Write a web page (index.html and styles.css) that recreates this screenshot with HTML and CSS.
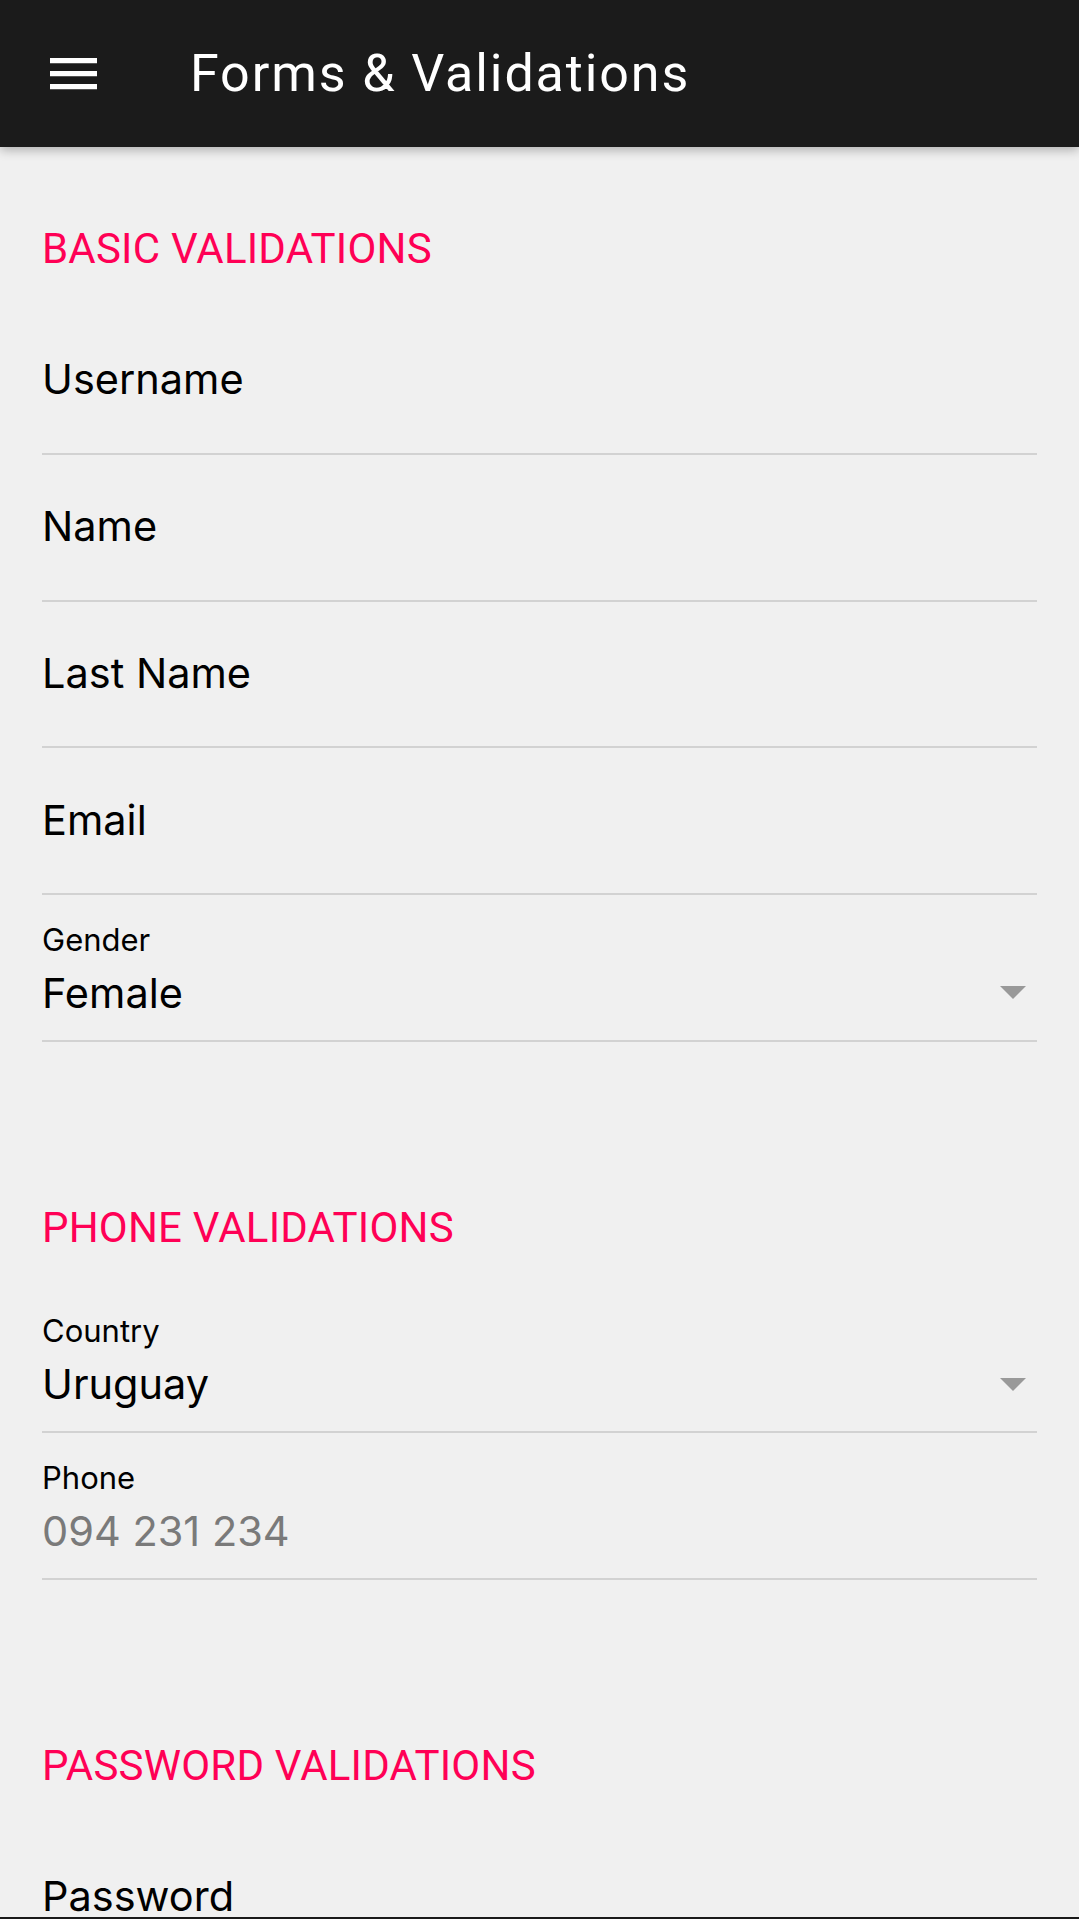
FILE: index.html
```html
<!DOCTYPE html>
<html lang="en">
<head>
<meta charset="utf-8">
<title>Forms &amp; Validations</title>
<link rel="stylesheet" href="styles.css">
</head>
<body>
<header class="appbar">
  <svg class="menu-icon" width="47" height="32" viewBox="0 0 47 32" aria-hidden="true">
    <rect x="0" y="0" width="47" height="5.25" fill="#ffffff"/>
    <rect x="0" y="13" width="47" height="5.25" fill="#ffffff"/>
    <rect x="0" y="26" width="47" height="5.25" fill="#ffffff"/>
  </svg>
  <h1 class="title">Forms &amp; Validations</h1>
</header>

<main class="form">
  <section class="section">
    <h2 class="section-title">BASIC VALIDATIONS</h2>
    <div class="field"><span class="hint">Username</span></div>
    <div class="field"><span class="hint">Name</span></div>
    <div class="field"><span class="hint">Last Name</span></div>
    <div class="field"><span class="hint">Email</span></div>
    <div class="field labeled">
      <span class="label">Gender</span>
      <div class="select-row">
        <span class="value">Female</span>
        <span class="arrow"></span>
      </div>
    </div>
  </section>

  <section class="section">
    <h2 class="section-title">PHONE VALIDATIONS</h2>
    <div class="field labeled">
      <span class="label">Country</span>
      <div class="select-row">
        <span class="value">Uruguay</span>
        <span class="arrow"></span>
      </div>
    </div>
    <div class="field labeled">
      <span class="label">Phone</span>
      <div class="select-row">
        <span class="value placeholder">094 231 234</span>
      </div>
    </div>
  </section>

  <section class="section">
    <h2 class="section-title">PASSWORD VALIDATIONS</h2>
    <div class="field"><span class="hint">Password</span></div>
  </section>
</main>

<div class="nav-edge"></div>
</body>
</html>
```

FILE: styles.css
```css
html, body {
  margin: 0;
  padding: 0;
  height: 100%;
  overflow: hidden;
}

body {
  background: #f0f0f0;
  font-family: Roboto, "Liberation Sans", sans-serif;
  color: #000;
}

.appbar {
  position: relative;
  z-index: 2;
  height: 147px;
  background: #1b1b1b;
  display: flex;
  align-items: center;
  box-shadow: 0 3px 10px rgba(0, 0, 0, 0.28);
}

.menu-icon {
  display: block;
  margin-left: 50px;
  flex: none;
}

.title {
  margin: 0 0 0 93px;
  font-size: 52px;
  font-weight: 400;
  color: #ffffff;
  line-height: 60px;
  letter-spacing: 1.9px;
}

.form {
  padding: 0 42px;
}

.section {
  padding-bottom: 83.6px;
}

.section-title {
  margin: 81px 0 38px;
  height: 42px;
  font-size: 42px;
  line-height: 42px;
  font-weight: 400;
  color: #ff0055;
  letter-spacing: 0.2px;
}

.field {
  height: 144.8px;
  border-bottom: 2px solid #d2d2d2;
  display: flex;
  flex-direction: column;
  justify-content: flex-end;
  box-sizing: content-box;
  font-family: Inter, Roboto, sans-serif;
}

.hint {
  display: block;
  font-size: 41.5px;
  line-height: 42px;
  margin-bottom: 52.5px;
  color: #000;
}

.labeled .label {
  display: block;
  font-size: 31px;
  line-height: 30px;
  color: #000;
  margin-bottom: 17px;
}

.select-row {
  display: flex;
  align-items: center;
  justify-content: space-between;
  height: 42px;
  margin-bottom: 26px;
}

.value {
  font-size: 41.5px;
  line-height: 42px;
  color: #000;
}

.value.placeholder {
  color: #7a7a7a;
}

.arrow {
  width: 0;
  height: 0;
  border-left: 13px solid transparent;
  border-right: 13px solid transparent;
  border-top: 13px solid #999999;
  margin-right: 11px;
}

.nav-edge {
  position: fixed;
  left: 0;
  right: 0;
  bottom: 0;
  height: 2px;
  background: #1a1a1a;
}
```
